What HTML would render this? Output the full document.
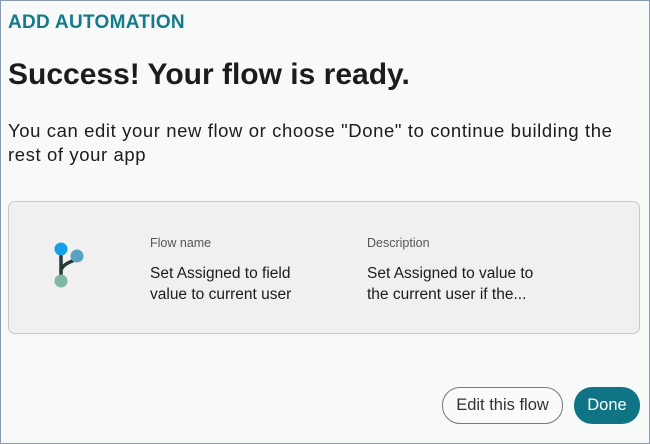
<!DOCTYPE html>
<html><head><style>
html,body{margin:0;padding:0}
body{width:650px;height:444px;background:#f8f9f9;font-family:"Liberation Sans",sans-serif;position:relative;overflow:hidden;}
.frame{position:absolute;left:0;top:0;width:650px;height:444px;box-sizing:border-box;border:1px solid #8a9bb0;pointer-events:none}
.t{position:absolute;left:8px;top:12px;font-size:19px;font-weight:bold;color:#137b8a;letter-spacing:0.3px}
h1{position:absolute;left:8px;top:58px;margin:0;font-size:30px;font-weight:bold;color:#1c1c1c}
.p{position:absolute;left:8px;top:119px;font-size:18.5px;line-height:24px;color:#1c1c1c;width:640px;letter-spacing:0.6px;white-space:nowrap}
.card{position:absolute;left:8px;top:201px;width:632px;height:133px;background:#f0f0f0;border:1px solid #c8c8c8;border-radius:7px;box-sizing:border-box}
.lab{position:absolute;font-size:12.5px;color:#555;top:34px}
.val{position:absolute;font-size:15.5px;line-height:21px;color:#1c1c1c;top:61px}
.b{position:absolute;top:387px;height:37px;border-radius:18px;box-sizing:border-box;font-size:16.5px;display:flex;align-items:center;justify-content:center}
</style></head><body>
<div class="t">ADD AUTOMATION</div>
<h1>Success! Your flow is ready.</h1>
<div class="p">You can edit your new flow or choose "Done" to continue building the<br>rest of your app</div>
<div class="card">
<svg style="position:absolute;left:40px;top:36px" width="45" height="55" viewBox="0 0 45 55">
<path d="M12 10 V40 M12 32 Q14 26 26 22 L28 18" stroke="#26393b" stroke-width="3.5" fill="none"/>
<circle cx="12" cy="11" r="6.5" fill="#14a0e6"/>
<circle cx="28" cy="18" r="6.5" fill="#5aa1c4"/>
<circle cx="12" cy="43" r="6.5" fill="#7eb8a2"/>
</svg>
<div class="lab" style="left:141px">Flow name</div>
<div class="val" style="left:141px">Set Assigned to field<br>value to current user</div>
<div class="lab" style="left:358px">Description</div>
<div class="val" style="left:358px">Set Assigned to value to<br>the current user if the...</div>
</div>
<div class="b" style="left:442px;width:121px;border:1px solid #777;background:#fafafa;color:#333">Edit this flow</div>
<div class="b" style="left:574px;width:66px;background:#0f7585;color:#fff">Done</div>
<div class="frame"></div>
</body></html>
